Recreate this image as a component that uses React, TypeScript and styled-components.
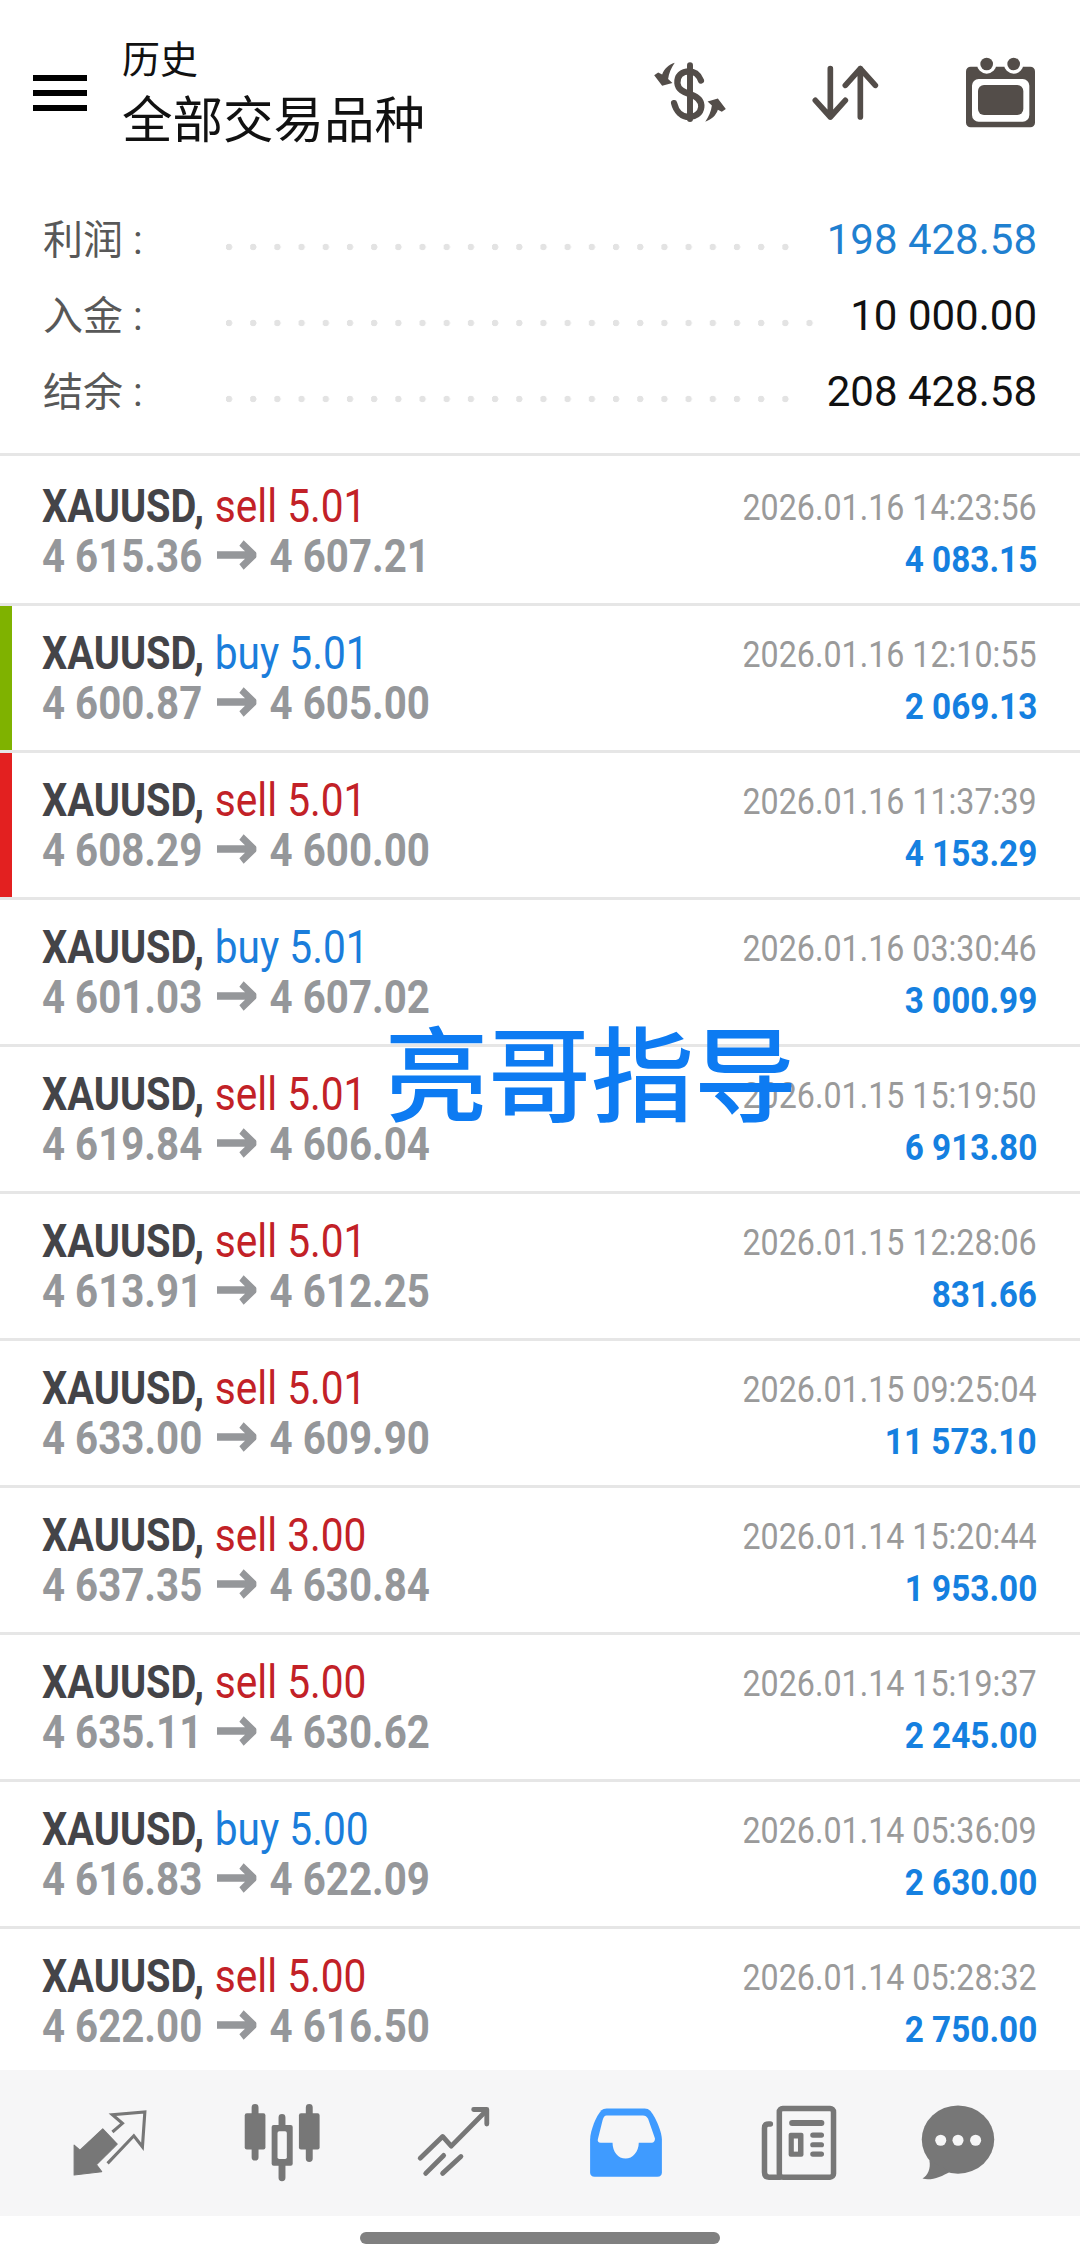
import React from "react";
import styled, { createGlobalStyle } from "styled-components";

const Global = createGlobalStyle`
  html, body { margin: 0; padding: 0; background: #fff; }
  body { font-family: Roboto, "Noto Sans CJK SC", sans-serif; }
`;

const Page = styled.div`
  position: relative;
  width: 1080px;
  height: 2265px;
  display: flex;
  flex-direction: column;
  overflow: hidden;
  background: #fff;
`;

const Header = styled.header`
  display: flex;
  align-items: center;
  padding: 35px 45px 0 33px;
`;
const MenuIcon = styled.svg`
  width: 54px;
  height: 36px;
  flex: none;
  margin-right: 35px;
`;
const TitleStack = styled.div`
  flex: 1;
  font-family: "Noto Sans CJK SC", sans-serif;
  color: #111;
`;
const Overline = styled.div`
  font-size: 38px;
  line-height: 44px;
`;
const Heading = styled.div`
  font-size: 50.5px;
  line-height: 68px;
  margin-top: 3px;
`;
const Actions = styled.div`
  display: flex;
  align-items: center;
`;
const ActionSvg = styled.svg<{ $gap: number }>`
  display: block;
  flex: none;
  margin-left: ${(p) => p.$gap}px;
`;

const Summary = styled.section`
  padding: 51px 43px 24px;
  border-bottom: 3px solid #e6e6e6;
`;
const SummaryRow = styled.div`
  display: flex;
  align-items: center;
  height: 76px;
`;
const SummaryLabel = styled.div`
  width: 183px;
  flex: none;
  font-family: Roboto, "Noto Sans CJK SC", sans-serif;
  font-size: 40px;
  line-height: 50px;
  margin-top: 3px;
  color: #585858;
`;
const Leader = styled.div`
  flex: 1;
  height: 8px;
  margin: 16px 32px 0 0;
  background-image: radial-gradient(circle at 3px 4px, #e3e3e3 3px, transparent 3.6px);
  background-size: 24.2px 8px;
  background-repeat: repeat-x;
`;
const SummaryValue = styled.div<{ $color: string }>`
  font-size: 42px;
  color: ${(p) => p.$color};
  white-space: nowrap;
`;

const List = styled.main`
  flex: 1;
  min-height: 0;
  overflow: hidden;
  padding-top: 3px;
`;
const Row = styled.div<{ $bar?: string }>`
  box-sizing: border-box;
  height: 147px;
  padding: 21px 43px 0 42px;
  border-bottom: 3px solid #e6e6e6;
  box-shadow: ${(p) => (p.$bar ? `inset 12px 0 0 ${p.$bar}` : "none")};
`;
const Line = styled.div`
  display: flex;
  justify-content: space-between;
  align-items: baseline;
  height: 51px;
  line-height: 51px;
`;
const TitleText = styled.span`
  display: inline-block;
  font-size: 46px;
  font-weight: 700;
  white-space: nowrap;
  transform: scaleX(0.865);
  transform-origin: left center;
  color: #444448;
`;
const PriceText = styled.span`
  display: inline-block;
  font-size: 46px;
  font-weight: 700;
  white-space: nowrap;
  transform: scaleX(0.875);
  transform-origin: left center;
  color: #95979a;
`;
const ArrowIcon = styled.svg`
  display: inline-block;
  width: 45px;
  height: 30px;
  margin: 0 15px 0 17px;
  vertical-align: 2px;
`;
const Side = styled.span<{ $buy: boolean }>`
  font-size: 47px;
  font-weight: 400;
  margin-left: 1px;
  color: ${(p) => (p.$buy ? "#1a7ddb" : "#c22127")};
`;
const DateText = styled.span`
  display: inline-block;
  font-size: 36px;
  white-space: nowrap;
  color: #9a9a9a;
  transform: translateY(-2px) scaleX(0.895);
  transform-origin: right center;
`;
const Profit = styled.span`
  display: inline-block;
  font-size: 37px;
  font-weight: 700;
  white-space: nowrap;
  color: #1580e0;
  transform: scaleX(0.9);
  transform-origin: right center;
`;

const Watermark = styled.div`
  position: absolute;
  left: 385px;
  top: 1000px;
  font-family: "Noto Sans CJK SC", sans-serif;
  font-size: 103px;
  line-height: 140px;
  font-weight: 500;
  white-space: nowrap;
  color: #0d7bf2;
`;

const Nav = styled.nav`
  height: 146px;
  flex: none;
  display: flex;
  align-items: center;
  padding-left: 72px;
  gap: 96px;
  background: #f6f6f7;
`;
const NavSvg = styled.svg<{ $shift?: number }>`
  display: block;
  flex: none;
  width: 76px;
  height: 78px;
  margin-left: ${(p) => p.$shift ?? 0}px;
`;
const HomeArea = styled.div`
  height: 49px;
  flex: none;
  display: flex;
  justify-content: center;
  padding-top: 16px;
  box-sizing: border-box;
`;
const HomeBar = styled.div`
  width: 360px;
  height: 12px;
  border-radius: 6px;
  background: #808080;
`;

type Trade = { side: "buy" | "sell"; lots: string; from: string; to: string; date: string; profit: string; bar?: string };
const trades: Trade[] = [
  { side: "sell", lots: "5.01", from: "4 615.36", to: "4 607.21", date: "2026.01.16 14:23:56", profit: "4 083.15" },
  { side: "buy", lots: "5.01", from: "4 600.87", to: "4 605.00", date: "2026.01.16 12:10:55", profit: "2 069.13", bar: "#7fb200" },
  { side: "sell", lots: "5.01", from: "4 608.29", to: "4 600.00", date: "2026.01.16 11:37:39", profit: "4 153.29", bar: "#e32020" },
  { side: "buy", lots: "5.01", from: "4 601.03", to: "4 607.02", date: "2026.01.16 03:30:46", profit: "3 000.99" },
  { side: "sell", lots: "5.01", from: "4 619.84", to: "4 606.04", date: "2026.01.15 15:19:50", profit: "6 913.80" },
  { side: "sell", lots: "5.01", from: "4 613.91", to: "4 612.25", date: "2026.01.15 12:28:06", profit: "831.66" },
  { side: "sell", lots: "5.01", from: "4 633.00", to: "4 609.90", date: "2026.01.15 09:25:04", profit: "11 573.10" },
  { side: "sell", lots: "3.00", from: "4 637.35", to: "4 630.84", date: "2026.01.14 15:20:44", profit: "1 953.00" },
  { side: "sell", lots: "5.00", from: "4 635.11", to: "4 630.62", date: "2026.01.14 15:19:37", profit: "2 245.00" },
  { side: "buy", lots: "5.00", from: "4 616.83", to: "4 622.09", date: "2026.01.14 05:36:09", profit: "2 630.00" },
  { side: "sell", lots: "5.00", from: "4 622.00", to: "4 616.50", date: "2026.01.14 05:28:32", profit: "2 750.00" },
];

const summary = [
  { label: "利润 :", value: "198 428.58", color: "#1f80d0" },
  { label: "入金 :", value: "10 000.00", color: "#111" },
  { label: "结余 :", value: "208 428.58", color: "#111" },
];

const DARK = "#534d49";
const GRAY = "#777";
const NAVBG = "#f6f6f7";
const CURL = "M104 38C86 44 72 56 66 74L54 68L42 76L66 108L97 99L84 87C86 70 94 52 104 38Z";

export default function App() {
  return (
    <Page>
      <Global />
      <Header>
        <MenuIcon viewBox="0 0 54 36">
          <rect y="0" width="54" height="6" fill="#000" />
          <rect y="15" width="54" height="6" fill="#000" />
          <rect y="30" width="54" height="6" fill="#000" />
        </MenuIcon>
        <TitleStack>
          <Overline>历史</Overline>
          <Heading>全部交易品种</Heading>
        </TitleStack>
        <Actions>
          <ActionSvg $gap={0} width="76" height="63" viewBox="36 33 228 190">
            <path d="M150 46V208" stroke={DARK} strokeWidth="18" strokeLinecap="round" fill="none" />
            <path d="M183 92C176 72 160 64 148 64C125 64 110 78 112 100C114 122 136 128 152 134C172 141 186 152 184 172C182 192 164 202 148 202C125 202 108 185 102 160" stroke={DARK} strokeWidth="19" strokeLinecap="round" fill="none" />
            <path d={CURL} fill={DARK} />
            <path d={CURL} fill={DARK} transform="rotate(180 150 127)" />
          </ActionSvg>
          <ActionSvg $gap={83} width="70" height="62" viewBox="635 125 210 186">
            <g stroke={DARK} strokeWidth="17" strokeLinecap="round" strokeLinejoin="round" fill="none">
              <path d="M693 145V290M648 240L693 290L738 240" />
              <path d="M783 145V290M738 195L783 145L828 195" />
            </g>
          </ActionSvg>
          <ActionSvg $gap={85} width="69" height="71" viewBox="1098 106 207 213">
            <rect x="1098" y="135" width="207" height="182" rx="14" fill={DARK} />
            <circle cx="1160" cy="127" r="29" fill="#fff" />
            <circle cx="1241" cy="127" r="29" fill="#fff" />
            <circle cx="1160" cy="127" r="19" fill={DARK} />
            <circle cx="1241" cy="127" r="19" fill={DARK} />
            <rect x="1116" y="172" width="172" height="128" rx="20" fill="#fff" />
            <rect x="1134" y="190" width="136" height="90" rx="18" fill={DARK} />
          </ActionSvg>
        </Actions>
      </Header>

      <Summary>
        {summary.map((s) => (
          <SummaryRow key={s.label}>
            <SummaryLabel>{s.label}</SummaryLabel>
            <Leader />
            <SummaryValue $color={s.color}>{s.value}</SummaryValue>
          </SummaryRow>
        ))}
      </Summary>

      <List>
        {trades.map((t) => (
          <Row key={t.date} $bar={t.bar}>
            <Line>
              <TitleText>
                XAUUSD, <Side $buy={t.side === "buy"}>{t.side} {t.lots}</Side>
              </TitleText>
              <DateText>{t.date}</DateText>
            </Line>
            <Line>
              <PriceText>
                {t.from}
                <ArrowIcon viewBox="0 0 45 30">
                  <path d="M0 15H40M28 3L42 15L28 27" fill="none" stroke="#95979a" strokeWidth="7.5" />
                </ArrowIcon>
                {t.to}
              </PriceText>
              <Profit>{t.profit}</Profit>
            </Line>
          </Row>
        ))}
      </List>

      <Nav>
        <NavSvg viewBox="209 166 220 226">
          <path d="M215 372V285L232 300L298 238L340 282L280 342L295 362Z" fill={GRAY} stroke={GRAY} strokeWidth="3" strokeLinejoin="round" />
          <path d="M326 247L355 222L326 197L420 189L413 290L388 258L312 338" fill="none" stroke={GRAY} strokeWidth="9" />
        </NavSvg>
        <NavSvg viewBox="707 166 220 226">
          <path d="M739 176V320M817 205V380M896 176V324" strokeWidth="20" stroke={GRAY} strokeLinecap="round" fill="none" />
          <rect x="709" y="193" width="60" height="105" rx="6" fill={GRAY} />
          <rect x="866" y="193" width="60" height="105" rx="6" fill={GRAY} />
          <rect x="787" y="227" width="61" height="118" rx="6" fill={GRAY} />
          <rect x="804" y="245" width="27" height="80" rx="5" fill={NAVBG} />
        </NavSvg>
        <NavSvg viewBox="1208 166 220 226">
          <g fill="none" stroke={GRAY} strokeWidth="14" strokeLinecap="round" strokeLinejoin="round">
            <path d="M1220 323L1285 260L1310 288L1412 185" />
            <path d="M1375 182H1413V224" />
            <path d="M1236 367L1288 315M1285 367L1338 318" />
          </g>
        </NavSvg>
        <NavSvg viewBox="141 162 220 226">
          <path d="M147 360V265C147 240 165 195 180 180Q185 175 195 175H305Q315 175 322 182C340 205 355 245 355 265V360Q355 373 342 373H160Q147 373 147 360Z" fill="#3f9bff" />
          <path d="M195 195H300Q310 195 315 205L335 262Q335 274 325 274H288C288 300 270 320 250 320C228 320 212 300 212 274H178Q166 274 170 262L183 210Q186 195 195 195Z" fill={NAVBG} />
        </NavSvg>
        <NavSvg viewBox="645 162 220 226" $shift={1}>
          <g fill="none" stroke={GRAY} strokeLinecap="round">
            <rect x="698" y="175" width="157" height="199" rx="10" strokeWidth="16" />
            <path d="M672 220H667Q655 220 655 232V360Q655 374 668 374H700" strokeWidth="16" />
            <path d="M735 217H820" strokeWidth="17" />
            <path d="M795 252H820M795 280H820M795 307H820" strokeWidth="15" />
          </g>
          <rect x="725" y="245" width="43" height="70" rx="6" fill={GRAY} />
          <rect x="740" y="262" width="12" height="38" fill={NAVBG} />
        </NavSvg>
        <NavSvg viewBox="1103 162 220 226" $shift={-13}>
          <ellipse cx="1213" cy="265" rx="105" ry="99" fill={GRAY} />
          <path d="M1130 325C1135 350 1125 370 1110 378C1135 386 1165 372 1190 358Z" fill={GRAY} />
          <circle cx="1163" cy="267" r="16" fill={NAVBG} />
          <circle cx="1213" cy="267" r="16" fill={NAVBG} />
          <circle cx="1264" cy="267" r="16" fill={NAVBG} />
        </NavSvg>
      </Nav>
      <HomeArea>
        <HomeBar />
      </HomeArea>

      <Watermark>亮哥指导</Watermark>
    </Page>
  );
}
